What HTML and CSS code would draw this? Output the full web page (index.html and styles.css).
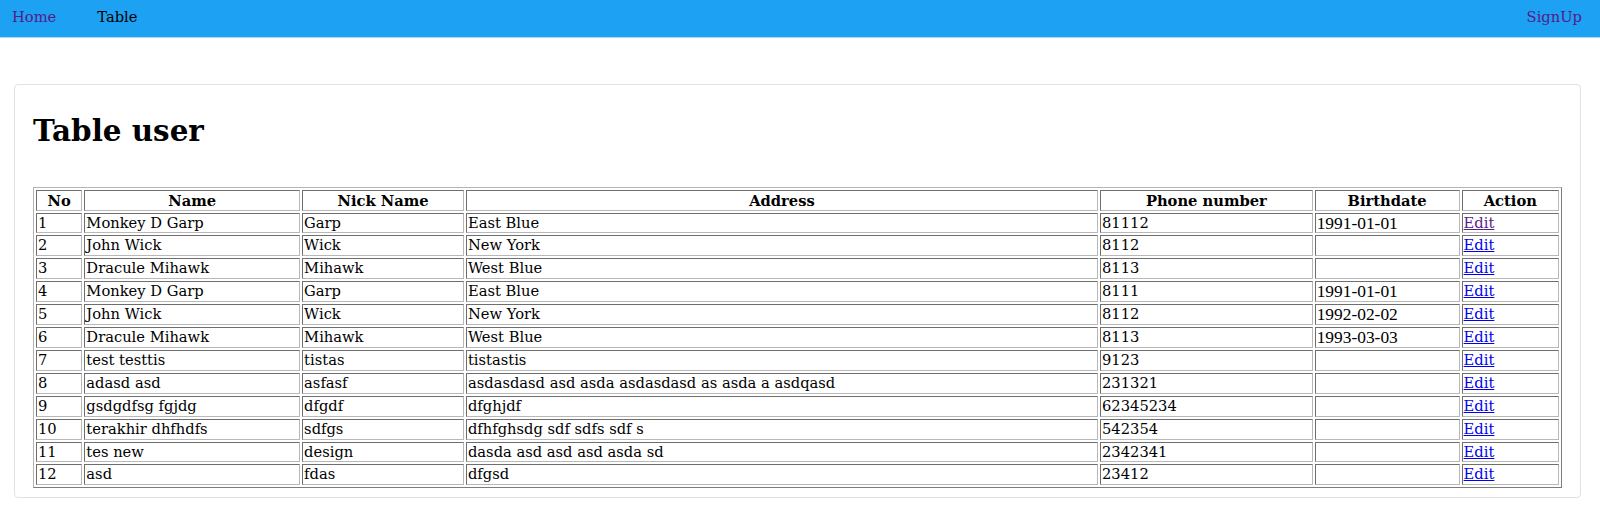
FILE: index.html
```html
<!DOCTYPE html>
<html>
<head>
<meta charset="utf-8">
<title>Table user</title>
<link rel="stylesheet" href="styles.css">
</head>
<body>
<nav class="topnav">
  <div class="nav-left">
    <a class="nav-link visited" href="#">Home</a>
    <span class="nav-link current">Table</span>
  </div>
  <a class="nav-link visited" href="#">SignUp</a>
</nav>
<main class="card">
  <h1 class="title">Table user</h1>
  <table class="users">
    <thead>
      <tr><th>No</th><th>Name</th><th>Nick Name</th><th>Address</th><th>Phone number</th><th>Birthdate</th><th>Action</th></tr>
    </thead>
    <tbody>
      <tr><td>1</td><td>Monkey D Garp</td><td>Garp</td><td>East Blue</td><td>81112</td><td class="date">1991-01-01</td><td><a class="edit visited" href="#">Edit</a></td></tr>
      <tr><td>2</td><td>John Wick</td><td>Wick</td><td>New York</td><td>8112</td><td class="date"></td><td><a class="edit" href="#">Edit</a></td></tr>
      <tr><td>3</td><td>Dracule Mihawk</td><td>Mihawk</td><td>West Blue</td><td>8113</td><td class="date"></td><td><a class="edit" href="#">Edit</a></td></tr>
      <tr><td>4</td><td>Monkey D Garp</td><td>Garp</td><td>East Blue</td><td>8111</td><td class="date">1991-01-01</td><td><a class="edit" href="#">Edit</a></td></tr>
      <tr><td>5</td><td>John Wick</td><td>Wick</td><td>New York</td><td>8112</td><td class="date">1992-02-02</td><td><a class="edit" href="#">Edit</a></td></tr>
      <tr><td>6</td><td>Dracule Mihawk</td><td>Mihawk</td><td>West Blue</td><td>8113</td><td class="date">1993-03-03</td><td><a class="edit" href="#">Edit</a></td></tr>
      <tr><td>7</td><td>test testtis</td><td>tistas</td><td>tistastis</td><td>9123</td><td class="date"></td><td><a class="edit" href="#">Edit</a></td></tr>
      <tr><td>8</td><td>adasd asd</td><td>asfasf</td><td>asdasdasd asd asda asdasdasd as asda a asdqasd</td><td>231321</td><td class="date"></td><td><a class="edit" href="#">Edit</a></td></tr>
      <tr><td>9</td><td>gsdgdfsg fgjdg</td><td>dfgdf</td><td>dfghjdf</td><td>62345234</td><td class="date"></td><td><a class="edit" href="#">Edit</a></td></tr>
      <tr><td>10</td><td>terakhir dhfhdfs</td><td>sdfgs</td><td>dfhfghsdg sdf sdfs sdf s</td><td>542354</td><td class="date"></td><td><a class="edit" href="#">Edit</a></td></tr>
      <tr><td>11</td><td>tes new</td><td>design</td><td>dasda asd asd asd asda sd</td><td>2342341</td><td class="date"></td><td><a class="edit" href="#">Edit</a></td></tr>
      <tr><td>12</td><td>asd</td><td>fdas</td><td>dfgsd</td><td>23412</td><td class="date"></td><td><a class="edit" href="#">Edit</a></td></tr>
    </tbody>
  </table>
</main>
</body>
</html>
```
FILE: styles.css
```css
html, body {
  margin: 0;
  padding: 0;
  background: #ffffff;
}
body {
  font-family: "DejaVu Serif", serif;
  font-size: 14.7px;
  color: #000000;
}
.topnav {
  height: 29px;
  background: #1da1f2;
  border-bottom: 1px solid #a9d9f8;
  display: flex;
  align-items: flex-start;
  justify-content: space-between;
  padding: 8px 18px 0 12px;
}
.nav-left {
  display: flex;
  gap: 41px;
}
.nav-link {
  text-decoration: none;
  color: #000000;
  line-height: 17px;
}
.nav-link.visited {
  color: #551a8b;
}
.card {
  margin: 46px 19px 20px 14px;
  border: 1px solid #e2e2e2;
  border-radius: 4px;
  padding: 10px 18px 9px 18px;
}
.title {
  font-size: 29.4px;
  font-weight: bold;
  margin: 18px 0 38.5px 0;
}
.users {
  width: 100%;
  border-style: solid;
  border-width: 1px;
  border-color: #b4b4b4 #7c7c7c #7c7c7c #b4b4b4;
  border-spacing: 2px;
  border-collapse: separate;
}
.users th,
.users td {
  border-style: solid;
  border-width: 1px;
  border-color: #6e6e6e #b8b8b8 #b8b8b8 #6e6e6e;
  padding: 1px;
}
.users th {
  font-weight: bold;
  text-align: center;
  line-height: 17px;
}
.users td {
  text-align: left;
  line-height: 16.9px;
}
.users td.date {
  font-family: "Liberation Serif", serif;
  font-size: 17.4px;
}
.edit {
  color: #0000ee;
  text-decoration: underline;
}
.edit.visited {
  color: #551a8b;
}
```
